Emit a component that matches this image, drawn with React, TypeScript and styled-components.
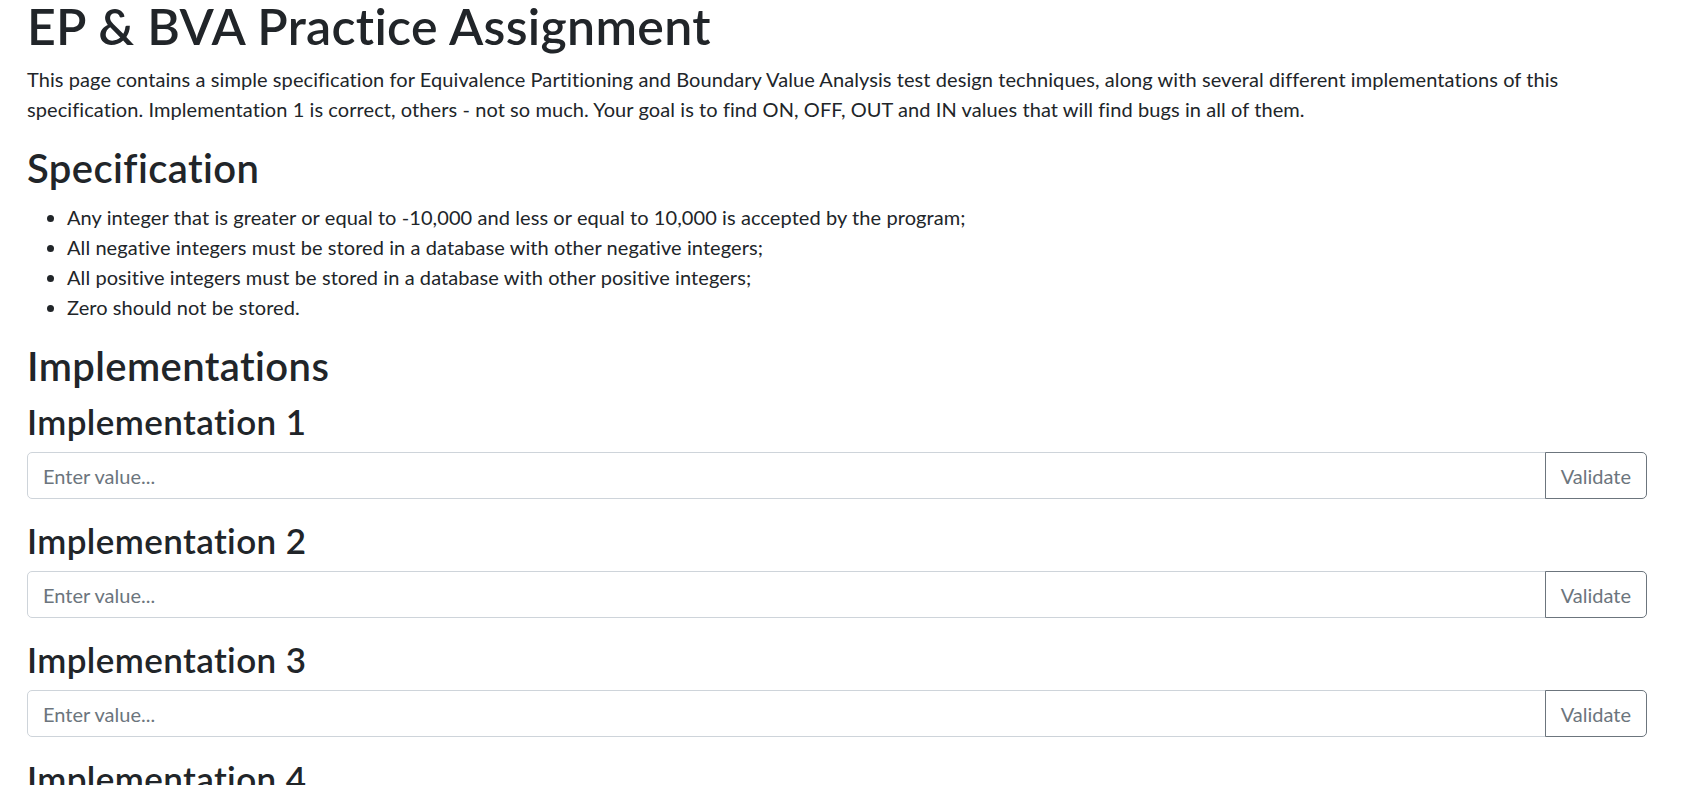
import React from 'react';
import styled, { createGlobalStyle } from 'styled-components';

const GlobalStyle = createGlobalStyle`
  *, *::before, *::after {
    box-sizing: border-box;
  }

  html, body {
    margin: 0;
    padding: 0;
    background: #fff;
    overflow: hidden;
  }

  body {
    font-family: Lato, "Open Sans", sans-serif;
    font-size: 20px;
    line-height: 1.5;
    letter-spacing: 0.08px;
    color: #212529;
  }
`;

const implementations = [1, 2, 3, 4, 5];

function App(): JSX.Element {
  return (
    <>
      <GlobalStyle />
      <Page>
        <Title>EP &amp; BVA Practice Assignment</Title>
        <Intro>
          This page contains a simple specification for Equivalence Partitioning and Boundary Value
          Analysis test design techniques, along with several different implementations of this
          specification. Implementation 1 is correct, others - not so much. Your goal is to find ON,
          OFF, OUT and IN values that will find bugs in all of them.
        </Intro>

        <SectionTitle>Specification</SectionTitle>
        <SpecList>
          <li>Any integer that is greater or equal to -10,000 and less or equal to 10,000 is accepted by the program;</li>
          <li>All negative integers must be stored in a database with other negative integers;</li>
          <li>All positive integers must be stored in a database with other positive integers;</li>
          <li>Zero should not be stored.</li>
        </SpecList>

        <SectionTitle>Implementations</SectionTitle>
        {implementations.map((n) => (
          <div key={n}>
            <ImplTitle>Implementation {n}</ImplTitle>
            <InputGroup>
              <ValueInput type="text" placeholder="Enter value..." />
              <ValidateButton type="button">Validate</ValidateButton>
            </InputGroup>
          </div>
        ))}
      </Page>
    </>
  );
}

const Page = styled.main`
  padding: 2px 46px 0 27px;
`;

const Title = styled.h1`
  margin: 0 0 14px;
  font-size: 50px;
  font-weight: 600;
  line-height: 48px;
  letter-spacing: 0.32px;
`;

const Intro = styled.p`
  margin: 0 0 20px;
`;

const SectionTitle = styled.h2`
  margin: 0 0 10px;
  font-size: 40px;
  font-weight: 600;
  line-height: 1.2;
  letter-spacing: 0.4px;
`;

const SpecList = styled.ul`
  margin: 0 0 20px;
  padding-left: 40px;
`;

const ImplTitle = styled.h3`
  margin: 0 0 10px;
  font-size: 35px;
  font-weight: 600;
  line-height: 1.2;
  letter-spacing: 0.4px;
`;

const InputGroup = styled.div`
  display: flex;
  align-items: stretch;
  margin-bottom: 20px;
`;

const ValueInput = styled.input`
  flex: 1 1 auto;
  min-width: 0;
  height: 47px;
  padding: 7px 15px;
  font-family: inherit;
  font-size: 20px;
  color: #495057;
  background: #fff;
  border: 1.25px solid #ced4da;
  border-radius: 5px 0 0 5px;
  outline: none;

  &::placeholder {
    color: #6c757d;
    opacity: 1;
  }
`;

const ValidateButton = styled.button`
  margin-left: -1px;
  padding: 7px 15px;
  font-family: inherit;
  font-size: 20px;
  line-height: 1.5;
  color: #6c757d;
  background: transparent;
  border: 1.25px solid #6c757d;
  border-radius: 0 5px 5px 0;
  cursor: pointer;
`;

export default App;
